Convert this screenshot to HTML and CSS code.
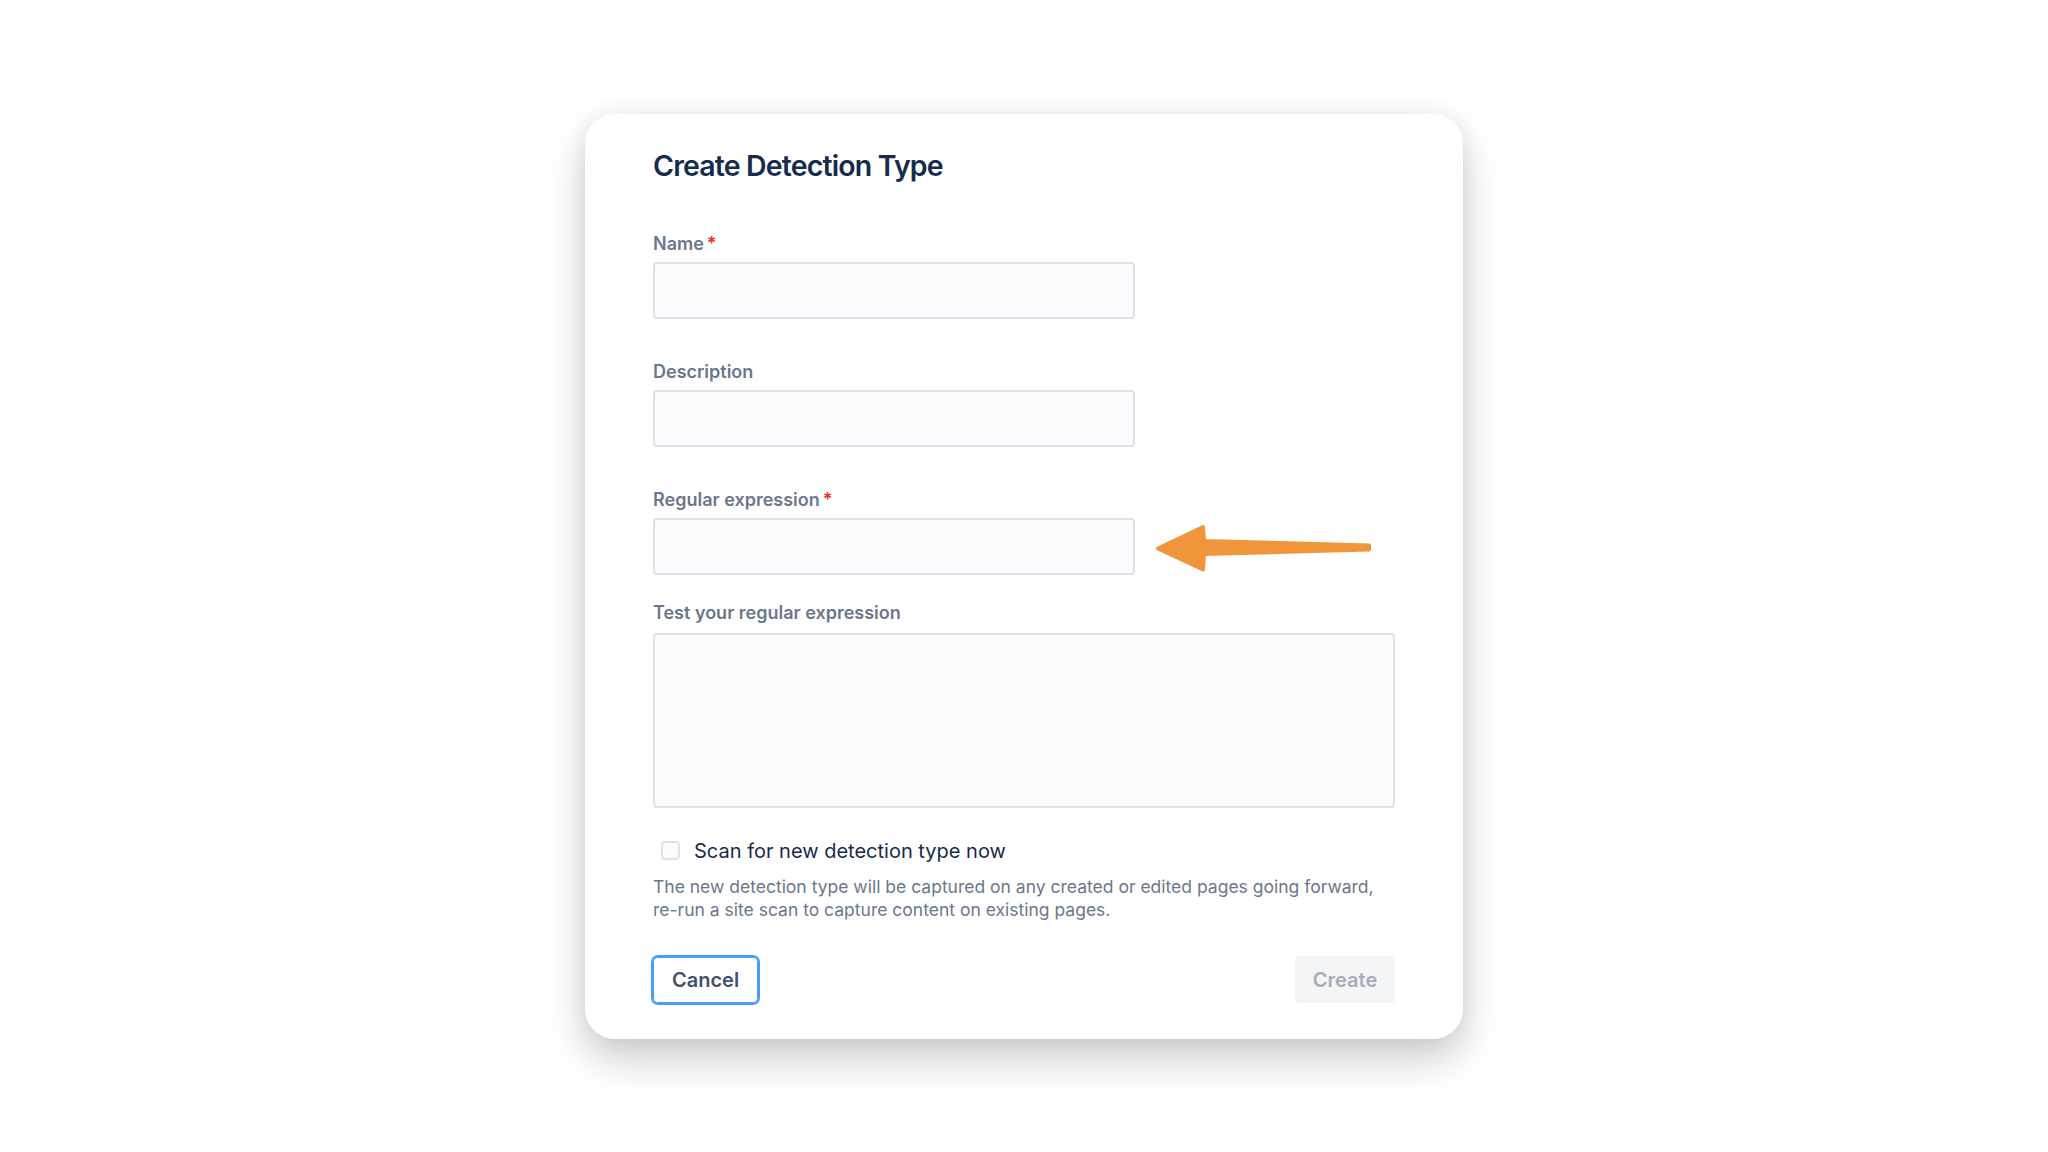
FILE: index.html
```html
<!DOCTYPE html>
<html lang="en">
<head>
    <meta charset="UTF-8">
    <title>Create Detection Type</title>
    <link rel="stylesheet" href="styles.css">
</head>
<body>
    <div class="modal">
        <h2 class="modal-title">Create Detection Type</h2>

        <form class="detection-form">
            <div class="field">
                <label class="field-label" for="dt-name">Name<span class="required">*</span></label>
                <input type="text" id="dt-name" class="text-input">
            </div>

            <div class="field">
                <label class="field-label" for="dt-desc">Description</label>
                <input type="text" id="dt-desc" class="text-input">
            </div>

            <div class="field field-regex">
                <label class="field-label" for="dt-regex">Regular expression<span class="required">*</span></label>
                <div class="input-row">
                    <input type="text" id="dt-regex" class="text-input">
                    <!-- annotation arrow -->
                    <svg class="hint-arrow" width="230" height="56" viewBox="0 0 230 56">
                        <path d="M9 30.5 L54 9 L55 23 L220 27.5 L220 31.5 L55 36 L54 51.5 Z" fill="#f0953a" stroke="#f0953a" stroke-width="4" stroke-linejoin="round"/>
                    </svg>
                </div>
            </div>

            <div class="field field-test">
                <label class="field-label" for="dt-test">Test your regular expression</label>
                <textarea id="dt-test" class="text-area"></textarea>
            </div>

            <label class="check-row">
                <input type="checkbox" class="check-box">
                <span>Scan for new detection type now</span>
            </label>
            <p class="help-text">The new detection type will be captured on any created or edited pages going forward, re-run a site scan to capture content on existing pages.</p>

            <div class="modal-footer">
                <button type="button" class="button cancel-btn">Cancel</button>
                <button type="submit" class="button create-btn" disabled>Create</button>
            </div>
        </form>
    </div>
</body>
</html>
```

FILE: styles.css
```css
/* base */
body { margin: 0; min-height: 100vh; display: flex; align-items: center; justify-content: center; background: #fff; font-family: Inter, "Liberation Sans", sans-serif; color: #172b4d; }

/* dialog */
.modal { width: 878px; box-sizing: border-box; padding: 34px 68px; background: #fff; border-radius: 30px; box-shadow: 0 20px 40px rgba(0,0,0,0.2), 0 0 24px rgba(0,0,0,0.06); }
.modal-title { margin: 0 0 50px; font-size: 28.5px; line-height: 36px; font-weight: 600; color: #172b4d; letter-spacing: -0.85px; }

/* fields */
.field { margin-bottom: 43px; }
.field-regex { margin-bottom: 28px; }
.field-test { margin-bottom: 31px; }
.field-label { display: block; margin-bottom: 8px; font-size: 18px; line-height: 20px; font-weight: 600; color: #6b778c; }
.field-test .field-label { margin-bottom: 10px; }
.required { color: #de350b; padding-left: 3px; }
.text-input { display: block; width: 482px; height: 57px; box-sizing: border-box; border: 2px solid #dfe1e6; border-radius: 4px; background: #fafbfc; margin: 0; }
.text-area { display: block; width: 100%; height: 175px; box-sizing: border-box; border: 2px solid #dfe1e6; border-radius: 4px; background: #fafbfc; margin: 0; resize: none; }
.input-row { display: flex; align-items: center; }
.hint-arrow { margin-left: 14px; }

/* checkbox + help */
.check-row { display: flex; align-items: center; height: 24px; font-size: 20px; line-height: 24px; color: #172b4d; }
.check-box { appearance: none; width: 19px; height: 19px; margin: 0 14px 0 8px; box-sizing: border-box; border: 2px solid #dfe1e6; border-radius: 4px; background: #fafbfc; }
.help-text { margin: 12px 0 34px; font-size: 17.5px; line-height: 23px; color: #6b778c; }

/* footer buttons */
.modal-footer { display: flex; justify-content: space-between; align-items: center; height: 50px; }
.button { font-family: inherit; font-size: 20px; font-weight: 600; border-radius: 4px; cursor: pointer; }
/* focus ring sits outside the button box */
.cancel-btn { height: 46px; padding: 0 19px; background: #fff; color: #42526e; border: none; border-radius: 5px; box-shadow: 0 0 0 2px #4c9aff, inset 0 0 0 1px #4c9aff; }
.create-btn { height: 47px; width: 100px; padding: 0; background: #f4f5f7; color: #a5adba; border: none; cursor: not-allowed; }
```
